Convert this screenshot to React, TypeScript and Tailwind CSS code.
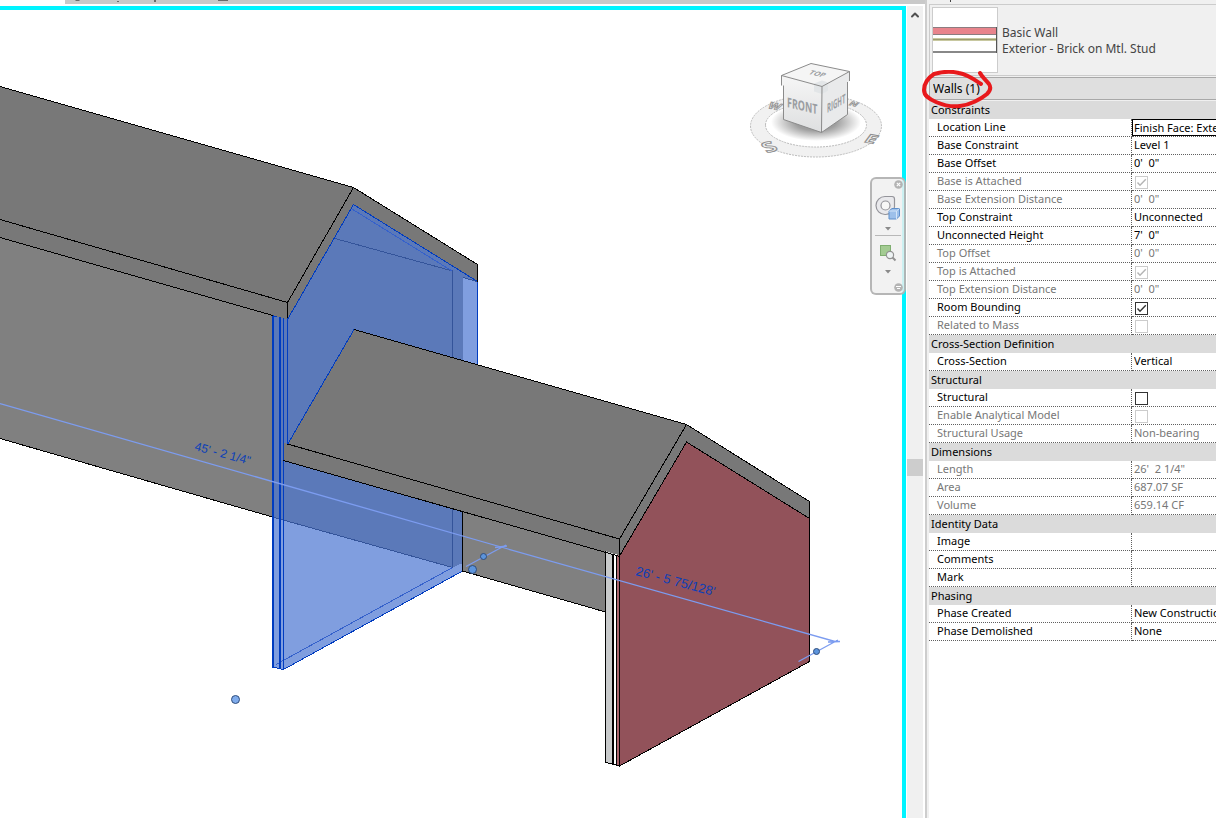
import * as React from "react"
import { ChevronUp } from "lucide-react"
import { clsx } from "clsx"

type Property = {
  label: string
  value?: string
  checked?: boolean
  kind?: "text" | "check" | "select"
  disabled?: boolean
}

type Group = {
  title: string
  rows: Property[]
}

const groups: Group[] = [
  {
    title: "Constraints",
    rows: [
      { label: "Location Line", value: "Finish Face: Exterior", kind: "select" },
      { label: "Base Constraint", value: "Level 1" },
      { label: "Base Offset", value: "0'  0\"" },
      { label: "Base is Attached", kind: "check", checked: true, disabled: true },
      { label: "Base Extension Distance", value: "0'  0\"", disabled: true },
      { label: "Top Constraint", value: "Unconnected" },
      { label: "Unconnected Height", value: "7'  0\"" },
      { label: "Top Offset", value: "0'  0\"", disabled: true },
      { label: "Top is Attached", kind: "check", checked: true, disabled: true },
      { label: "Top Extension Distance", value: "0'  0\"", disabled: true },
      { label: "Room Bounding", kind: "check", checked: true },
      { label: "Related to Mass", kind: "check", disabled: true },
    ],
  },
  {
    title: "Cross-Section Definition",
    rows: [{ label: "Cross-Section", value: "Vertical" }],
  },
  {
    title: "Structural",
    rows: [
      { label: "Structural", kind: "check" },
      { label: "Enable Analytical Model", kind: "check", disabled: true },
      { label: "Structural Usage", value: "Non-bearing", disabled: true },
    ],
  },
  {
    title: "Dimensions",
    rows: [
      { label: "Length", value: "26'  2 1/4\"", disabled: true },
      { label: "Area", value: "687.07 SF", disabled: true },
      { label: "Volume", value: "659.14 CF", disabled: true },
    ],
  },
  {
    title: "Identity Data",
    rows: [
      { label: "Image", value: "" },
      { label: "Comments", value: "" },
      { label: "Mark", value: "" },
    ],
  },
  {
    title: "Phasing",
    rows: [
      { label: "Phase Created", value: "New Construction" },
      { label: "Phase Demolished", value: "None" },
    ],
  },
]

function CheckBox({ id, checked, disabled }: { id: string; checked?: boolean; disabled?: boolean }) {
  return (
    <span className="relative mt-[3px] ml-[3px] block size-[13px]">
      <input
        id={id}
        type="checkbox"
        defaultChecked={checked}
        disabled={disabled}
        className={clsx(
          "peer block size-[13px] appearance-none border bg-white",
          disabled ? "border-[#cccccc]" : "border-[#333333]"
        )}
      />
      <svg
        viewBox="0 0 13 13"
        aria-hidden="true"
        className={clsx(
          "pointer-events-none absolute inset-0 hidden size-[13px] peer-checked:block",
          disabled ? "text-[#b4b4b4]" : "text-[#333333]"
        )}
      >
        <path d="M2.5 6.5 5 9.2 10.8 3.2" fill="none" stroke="currentColor" strokeWidth="1.4" />
      </svg>
    </span>
  )
}

function PropertyRow({ id, row }: { id: string; row: Property }) {
  const color = row.disabled ? "text-[#777777]" : "text-black"

  return (
    <tr className="h-[18px]">
      <th
        scope="row"
        className={clsx(
          "border-r border-b border-dotted border-[#606060] p-0 pl-2 text-left align-top font-normal whitespace-nowrap",
          color
        )}
      >
        <label htmlFor={id} className="block h-[17px] leading-4">
          {row.label}
        </label>
      </th>
      <td className="border-b border-dotted border-[#606060] p-0 align-top">
        {row.kind === "check" ? (
          <CheckBox id={id} checked={row.checked} disabled={row.disabled} />
        ) : row.kind === "select" ? (
          <select
            id={id}
            className="block h-[17px] w-full appearance-none overflow-hidden border border-r-0 border-black bg-white pl-px leading-[15px] text-black"
          >
            <option>{row.value}</option>
          </select>
        ) : (
          <input
            id={id}
            type="text"
            defaultValue={row.value}
            disabled={row.disabled}
            className={clsx("block h-4 w-full bg-transparent pl-0.5 leading-4", color)}
          />
        )}
      </td>
    </tr>
  )
}

function PropertyTable() {
  return (
    <table className="w-full table-fixed border-separate border-spacing-0 bg-white text-[11px]">
      <colgroup>
        <col className="w-[203px]" />
        <col />
      </colgroup>
      {groups.map((group, g) => (
        <tbody key={group.title}>
          <tr className="h-[18px]">
            <th
              colSpan={2}
              scope="rowgroup"
              className="bg-[#dbdbdb] p-0 pl-0.5 text-left font-normal leading-[18px] text-black"
            >
              {group.title}
            </th>
          </tr>
          {group.rows.map((row, r) => (
            <PropertyRow key={row.label} id={`prop-${g}-${r}`} row={row} />
          ))}
        </tbody>
      ))}
    </table>
  )
}

function WallPreview() {
  return (
    <svg viewBox="0 0 66 66" className="size-[66px] shrink-0" shapeRendering="crispEdges" aria-hidden="true">
      <rect x="0.5" y="0.5" width="65" height="65" fill="#fff" stroke="#cccccc" />
      <rect x="1" y="20" width="64" height="8" fill="#e8848c" />
      <path d="M1 20.5H65M1 27.5H65" stroke="#8c7c80" />
      <rect x="1" y="31" width="64" height="3" fill="#c8c8a0" />
      <path d="M1 32.5H65" stroke="#9c9c70" />
      <path d="M1 45H65" stroke="#888" strokeWidth="2" />
      <path d="M64.5 20V46" stroke="#555" />
    </svg>
  )
}

function RedMark() {
  return (
    <svg
      viewBox="0 0 74 40"
      className="pointer-events-none absolute -top-2 -left-2.5 h-10 w-[74px]"
      fill="none"
      stroke="#e8191c"
      strokeWidth="4"
      strokeLinecap="round"
      strokeLinejoin="round"
      aria-hidden="true"
    >
      <path d="M61 14C55 10 47 4 39 3C31 1 21 2 14 4C8 8 4 14 4 20C4 26 9 29 16 32C23 35 33 37 40 36C50 35 61 29 67 24C71 20 71 17 69 14C66 10 62 7 60 3" />
    </svg>
  )
}

function Model() {
  return (
    <svg
      viewBox="0 10 902 808"
      preserveAspectRatio="xMinYMin meet"
      className="block h-full w-full"
      role="img"
      aria-label="3D view"
    >
      <g shapeRendering="crispEdges" strokeWidth="1">
        {/* long building */}
        <path d="M0 237 272 315 288 319 454 271 454 568 272 517 0 438.5Z" fill="#808080" />
        <path d="M0 438.5 272.5 517" stroke="#000" />
        {/* selected gable wall */}
        <path
          d="M272.5 315.5 288 319 353.5 204.5 477.5 281.5V400L462.5 571 283.5 669.5 272.5 667Z"
          fill="#809edf"
        />
        <path
          d="M272.5 315.5 288 319 353.5 204.5 463 273V563L452.5 567.5 272.5 517Z"
          fill="#5b79b9"
        />
        <path d="M463 273 477.5 281.5 463 277.5Z" fill="#5b79b9" />
        <path d="M335 238.5 452.5 271V567.5L272.5 517M463 277.5 477 281.5" fill="none" stroke="#34549a" />
        <path d="M352 209 452 271M276 664.5 452.5 567.5" stroke="#3561cb" />
        <path d="M462.5 571 283.5 669.5 272.5 667M477.5 281V364" fill="none" stroke="#003cc0" />
        <path d="M273 315V667M280 317V669" stroke="#003cc0" strokeWidth="2" />
        <path d="M283.5 318V669M287.5 319V444M272 315.5 288 319" stroke="#003cc0" />
        {/* long building roof */}
        <path
          d="M0 86.5 353.5 187.5 477.5 264.5V281.5L353.5 204.5 287.5 319.5 272 315 0 237.5Z"
          fill="#787878"
        />
        <path
          d="M0 86.5 353.5 187.5 477.5 264.5V281.5M353.5 187.5 287.5 302.5V319M0 219.5 287.5 302.5M0 237.5 273 315.5"
          fill="none"
          stroke="#000"
        />
        <path d="M477.5 281.5 353.5 204.5 287.5 319.5" fill="none" stroke="#003cc0" />
        {/* low building */}
        <path d="M462.5 510 605.5 551V612L462.5 571Z" fill="#808080" />
        <path d="M462.5 511V571L605.5 612" fill="none" stroke="#000" />
        <path
          d="M354 329.5 686.5 424.5 809.5 501.5V518.5L686.5 442 620 556.5 283.5 460.5V443L288 444Z"
          fill="#787878"
        />
        <path d="M354 329.5 287.5 444.5" stroke="#003cc0" />
        <path d="M605.5 551 620 556V766L605.5 762.5Z" fill="#c8cacb" />
        <path d="M614 554H617V765.5L614 765Z" fill="#fff" />
        <path d="M617 555H620V766L617 765Z" fill="#a9656d" />
        <path d="M605.5 551V762.5L620 766M616.5 555V765" fill="none" stroke="#000" />
        <path d="M613 554V765" stroke="#000" strokeWidth="2" />
        <path d="M686.5 442 809.5 518.5V661.5L619.5 766V556Z" fill="#92525a" stroke="#000" />
        <path
          d="M354 329.5 686.5 424.5 809.5 501.5V519M686.5 424.5 619.5 539V556M287.5 444 619.5 539M283.5 460.5 620 556.5"
          fill="none"
          stroke="#000"
        />
      </g>
      {/* dimension string */}
      <g stroke="#7c9cf0" strokeWidth="1.3" fill="none">
        <path d="M0 403.5 508 549 835 641.5" />
        <path d="M466 566.5 506 545M495 547.5 507 546" />
        <path d="M798.5 661.5 838 640M828 642 840 641.5" />
      </g>
      <g stroke="#2f4d7c" fill="#5c94dc">
        <circle cx="483.5" cy="556.5" r="3" />
        <circle cx="472.5" cy="569.5" r="4" />
        <circle cx="816.5" cy="651.5" r="3" />
        <circle cx="235.5" cy="699.5" r="4" fill="#80acec" />
      </g>
      <g fill="#0b3fb8" fontFamily="Liberation Sans, Arial, sans-serif">
        <text transform="translate(194 450) rotate(15)" fontSize="12">
          45' - 2 1/4"
        </text>
        <text transform="translate(635 575) rotate(15)" fontSize="13">
          26' - 5 75/128'
        </text>
      </g>
    </svg>
  )
}

function ViewCube() {
  return (
    <svg
      viewBox="748 58 136 102"
      className="absolute top-12 right-[18px] h-[102px] w-[136px]"
      role="img"
      aria-label="View cube"
    >
      <defs>
        <radialGradient id="cube-shadow">
          <stop offset="0.45" stopColor="#000" stopOpacity="0.38" />
          <stop offset="1" stopColor="#000" stopOpacity="0" />
        </radialGradient>
        <linearGradient id="cube-front" x1="0" y1="0" x2="0" y2="1">
          <stop offset="0" stopColor="#f6f6f6" />
          <stop offset="1" stopColor="#dedfe0" />
        </linearGradient>
      </defs>
      <path
        fillRule="evenodd"
        d="M750.5 126A65.5 31 0 1 0 881.5 126 65.5 31 0 1 0 750.5 126ZM765.5 125A50.5 22 0 1 1 866.5 125 50.5 22 0 1 1 765.5 125Z"
        fill="#f1f1f1"
        stroke="#bcbcbc"
        strokeDasharray="2 1"
      />
      <ellipse cx="816" cy="122" rx="45" ry="19" fill="url(#cube-shadow)" />
      <g fill="#ececec" stroke="#8f8f8f" strokeWidth="0.9" fontFamily="Open Sans, sans-serif" fontWeight="700">
        <text transform="matrix(1.4 -0.35 0.7 0.8 767 153)" fontSize="16">S</text>
        <text transform="matrix(1.4 0.25 -0.6 0.8 863 142)" fontSize="14">E</text>
        <text transform="matrix(1 0.2 -0.5 0.7 767 108)" fontSize="12">W</text>
        <text transform="matrix(1 0.2 -0.5 0.5 848 105)" fontSize="10">N</text>
      </g>
      <path d="M781.5 75.5 811 63.5 849.5 71.5 822 86.5Z" fill="#f5f5f5" />
      <path d="M781.5 75.5 822 86.5 821.5 132.5 783.5 119.5V85.5H781.5Z" fill="url(#cube-front)" />
      <path d="M822 86.5 849.5 71.5V81L847.5 82V114.5L821.5 132.5Z" fill="#e9eaeb" />
      <path d="M814 83.5 822 80.5 828 82.5V90.5L822 94 814 91.5Z" fill="#dfe2e5" opacity="0.8" />
      <path
        d="M781.5 85.5V75.5L811 63.5 849.5 71.5V81M781.5 75.5 822 86.5 849.5 71.5M783.5 85.5V119.5L821.5 132.5 847.5 114.5V82M822 86.5 821.5 132.5"
        fill="none"
        stroke="#8b8b8b"
      />
      <g fill="#9a9da1" fontFamily="Open Sans, sans-serif" fontWeight="700">
        <text transform="matrix(1 0.24 0 1.5 787 107)" fontSize="9">
          FRONT
        </text>
        <text transform="matrix(0.67 -0.38 0 1.4 827 113)" fontSize="9">
          RIGHT
        </text>
        <text transform="matrix(0.85 0.18 -0.6 0.6 808 74)" fontSize="9">
          TOP
        </text>
      </g>
    </svg>
  )
}

function NavigationBar() {
  return (
    <div className="absolute top-[167px] -right-1 flex h-[118px] w-9 flex-col items-center rounded-md border-2 border-[#a8a8a8]/80 bg-[#f0f0f0]/85">
      <button type="button" aria-label="Close" className="mt-px mr-px self-end">
        <svg viewBox="0 0 9 9" className="size-[9px]">
          <circle cx="4.5" cy="4.5" r="4.3" fill="#b4b4b4" />
          <path d="M2.8 2.8 6.2 6.2M6.2 2.8 2.8 6.2" stroke="#fff" strokeWidth="1.1" />
        </svg>
      </button>
      <button type="button" aria-label="Full navigation wheel" className="mt-1.5">
        <svg viewBox="0 0 26 26" className="size-[26px]">
          <path
            d="M10 1.5H17Q19.5 1.5 19.5 4V12A9 9 0 0 1 10 19.5 9 9 0 0 1 10 1.5Z"
            fill="#e9e9ec"
            stroke="#94949a"
            strokeWidth="1.2"
          />
          <circle cx="10.5" cy="10.5" r="4.5" fill="#f7f7f7" stroke="#94949a" strokeWidth="1.2" />
          <path d="M14 16 17 13.5H24.5V21L21.5 24H14Z" fill="#9dc0ea" stroke="#5f8fcb" />
          <path d="M14 16H21.5L24.5 13.5M21.5 16V24" fill="none" stroke="#d2e4f8" />
        </svg>
      </button>
      <button type="button" aria-label="Wheel options" className="mt-1.5">
        <svg viewBox="0 0 6 4" className="h-1 w-1.5">
          <path d="M0 0H6L3 3.5Z" fill="#8a8a8a" />
        </svg>
      </button>
      <div className="mt-1 w-[26px] border-t border-[#b8b8b8]" />
      <button type="button" aria-label="Zoom in region" className="mt-2">
        <svg viewBox="0 0 18 18" className="size-[18px]">
          <rect x="1.5" y="1.5" width="10" height="10" fill="#a3cb92" stroke="#7fae70" />
          <circle cx="11" cy="11" r="3.6" fill="#eef3f4" stroke="#929292" strokeWidth="1.2" />
          <path d="M13.5 13.5 16.5 16.5" stroke="#929292" strokeWidth="2" />
        </svg>
      </button>
      <button type="button" aria-label="Zoom options" className="mt-2">
        <svg viewBox="0 0 6 4" className="h-1 w-1.5">
          <path d="M0 0H6L3 3.5Z" fill="#8a8a8a" />
        </svg>
      </button>
      <button type="button" aria-label="Customize" className="mt-auto mr-px mb-px self-end">
        <svg viewBox="0 0 9 9" className="size-[9px]">
          <circle cx="4.5" cy="4.5" r="4.3" fill="#b4b4b4" />
          <path d="M2 3.5H7M3 5.5H6" stroke="#fff" />
        </svg>
      </button>
    </div>
  )
}

function DrawingArea() {
  return (
    <section className="flex min-w-0 flex-1 flex-col bg-white">
      <div className="ml-[65px] h-1 bg-[#c9c9c9]">
        <svg viewBox="0 0 170 4" className="block h-1 w-[170px]" aria-hidden="true">
          <path d="M10 0H15L14 1H11ZM52 1H54V2H52ZM89 0H91V2H89ZM153 0H163V1H153Z" fill="#6a6a6a" />
        </svg>
      </div>
      <div className="flex flex-1 pt-0.5">
        <div className="relative min-w-0 flex-1 border-t-4 border-r-4 border-[#00f4ff] bg-white">
          <Model />
          <ViewCube />
          <NavigationBar />
        </div>
        <div className="mr-0.5 ml-px flex w-4 flex-col bg-[#f0f0f0]">
          <button type="button" aria-label="Scroll up" className="flex h-[17px] items-center justify-center">
            <ChevronUp className="size-3 text-[#505050]" strokeWidth={4} />
          </button>
          <div className="flex flex-1 flex-col">
            <div className="flex-[56]" />
            <div className="h-[17px] bg-[#cdcdcd]" />
            <div className="flex-[44]" />
          </div>
        </div>
      </div>
    </section>
  )
}

function PropertiesPanel() {
  return (
    <aside className="flex w-[291px] shrink-0 flex-col border-l-2 border-[#cdcdcd] bg-[#f0f0f0] pl-0.5">
      <div className="h-1">
        <svg viewBox="0 0 30 4" className="block h-1 w-[30px]" aria-hidden="true">
          <path d="M21 0H22V2H21Z" fill="#444" />
        </svg>
      </div>
      <div className="flex h-[72px] items-start gap-1 border-t border-l border-b border-[#cccccc] pt-0.5 pl-0.5">
        <WallPreview />
        <div className="pt-[18px] text-[12px] leading-4 whitespace-nowrap text-[#444444]">
          <p>Basic Wall</p>
          <p>Exterior - Brick on Mtl. Stud</p>
        </div>
      </div>
      <div className="relative mt-px mb-px h-[23px] border-y border-l border-[#a8a8a8] bg-[#dfdfdf]">
        <select
          aria-label="Element filter"
          className="block h-full w-full appearance-none bg-transparent pl-[3px] text-[12px] text-black"
        >
          <option>Walls (1)</option>
        </select>
        <RedMark />
      </div>
      <PropertyTable />
      <div className="flex-1 bg-white" />
    </aside>
  )
}

export default function App() {
  return (
    <main className="flex h-screen overflow-hidden bg-white font-['Noto_Sans','Open_Sans',sans-serif]">
      <DrawingArea />
      <PropertiesPanel />
    </main>
  )
}
